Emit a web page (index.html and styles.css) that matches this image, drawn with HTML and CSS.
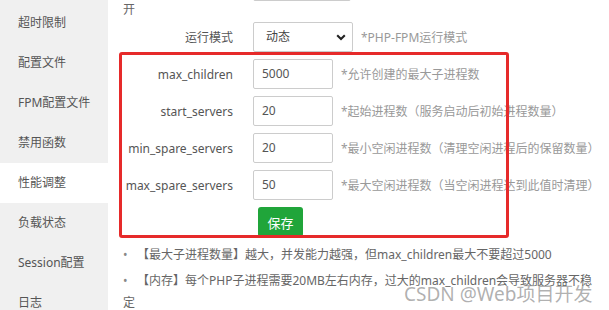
FILE: index.html
```html
<!DOCTYPE html>
<html lang="zh-CN">
<head>
<meta charset="utf-8">
<title>PHP 性能调整</title>
<link rel="stylesheet" href="styles.css">
</head>
<body>
<div class="page">
  <aside class="side">
    <div class="side-item">超时限制</div>
    <div class="side-item">配置文件</div>
    <div class="side-item">FPM配置文件</div>
    <div class="side-item">禁用函数</div>
    <div class="side-item active">性能调整</div>
    <div class="side-item">负载状态</div>
    <div class="side-item">Session配置</div>
    <div class="side-item">日志</div>
  </aside>
  <main class="main">
    <div class="row stub"><span class="label"></span><div class="field wide"></div></div>
    <div class="wrapline">开</div>
    <div class="row">
      <span class="label">运行模式</span>
      <div class="field select">
        <span>动态</span>
        <svg class="chev" width="10" height="7" viewBox="0 0 10 7"><polyline points="1.2,1.3 5,5 8.8,1.3" fill="none" stroke="#222" stroke-width="2.1"/></svg>
      </div>
      <span class="hint">*PHP-FPM运行模式</span>
    </div>
    <div class="row">
      <span class="label">max_children</span>
      <div class="field">5000</div>
      <span class="hint">*允许创建的最大子进程数</span>
    </div>
    <div class="row">
      <span class="label">start_servers</span>
      <div class="field">20</div>
      <span class="hint">*起始进程数（服务启动后初始进程数量）</span>
    </div>
    <div class="row">
      <span class="label">min_spare_servers</span>
      <div class="field">20</div>
      <span class="hint">*最小空闲进程数（清理空闲进程后的保留数量）</span>
    </div>
    <div class="row">
      <span class="label">max_spare_servers</span>
      <div class="field">50</div>
      <span class="hint">*最大空闲进程数（当空闲进程达到此值时清理）</span>
    </div>
    <div class="row btnrow">
      <span class="label"></span>
      <button class="save">保存</button>
    </div>
    <ul class="tips">
      <li>【最大子进程数量】越大，并发能力越强，但max_children最大不要超过5000</li>
      <li>【内存】每个PHP子进程需要20MB左右内存，过大的max_children会导致服务器不稳定</li>
    </ul>
  </main>
  <div class="annot"></div>
  <div class="watermark">CSDN @Web项目开发</div>
</div>
</body>
</html>
```

FILE: styles.css
```css
html, body {
  margin: 0;
  padding: 0;
}
body {
  font-family: "Noto Sans", "Noto Sans CJK SC", sans-serif;
  font-size: 12px;
  color: #555;
  background: #fff;
}
.page {
  position: relative;
  display: flex;
  width: 609px;
  height: 310px;
  overflow: hidden;
}
.side {
  width: 108px;
  flex: none;
  background: #f0f0f0;
  padding-top: 3px;
  box-sizing: border-box;
}
.side-item {
  height: 40px;
  line-height: 40px;
  padding-left: 18px;
  color: #555;
  white-space: nowrap;
}
.side-item.active {
  background: #fff;
}
.main {
  flex: 1;
  display: flex;
  flex-direction: column;
  padding-left: 15px;
  padding-right: 11px;
  min-width: 0;
}
.row {
  display: flex;
  align-items: center;
  height: 30px;
  margin-bottom: 7px;
  flex: none;
}
.row.stub {
  margin-top: -29px;
  margin-bottom: 0;
}
.wrapline {
  line-height: 18px;
  margin-bottom: 3px;
  color: #666;
}
.label {
  width: 110px;
  flex: none;
  text-align: right;
  margin-right: 20px;
  white-space: nowrap;
  color: #555;
}
.field {
  box-sizing: border-box;
  width: 80px;
  height: 30px;
  flex: none;
  border: 1px solid #ccc;
  border-radius: 2px;
  padding-left: 8px;
  line-height: 28px;
  color: #555;
  background: #fff;
}
.field.wide {
  width: 98px;
}
.field.select {
  width: 100px;
  padding-left: 12px;
  padding-right: 6px;
  display: flex;
  align-items: center;
  justify-content: space-between;
  color: #444;
}
.chev {
  display: block;
}
.hint {
  margin-left: 8px;
  color: #999;
  white-space: nowrap;
}
.btnrow {
  margin-bottom: 7px;
}
.save {
  margin-left: 5px;
  width: 45px;
  height: 30px;
  border: none;
  border-radius: 3px;
  background: #20a53a;
  color: #fff;
  font-family: inherit;
  font-size: 13px;
  padding: 0;
}
.tips {
  list-style: none;
  margin: 0;
  padding: 0;
  color: #666;
}
.tips li {
  line-height: 22px;
  margin-bottom: 4px;
}
.tips li::before {
  content: "•";
  display: inline-block;
  width: 14px;
  color: #888;
}
.annot {
  position: absolute;
  left: 119px;
  top: 52px;
  width: 384px;
  height: 180px;
  border: 3px solid #e62a2a;
  border-radius: 3px;
  pointer-events: none;
}
.watermark {
  position: absolute;
  left: 404px;
  top: 279px;
  font-size: 19px;
  color: rgba(110, 110, 110, 0.55);
  white-space: nowrap;
}
```
